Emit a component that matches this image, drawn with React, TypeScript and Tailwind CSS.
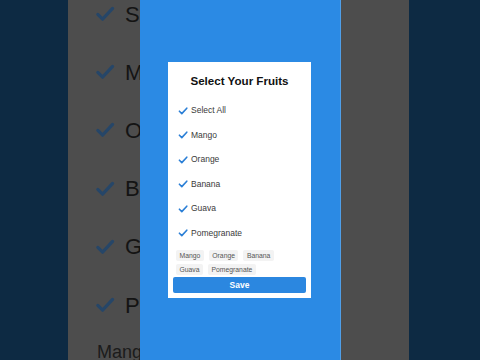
import React from 'react';

const fruits = ['Mango', 'Orange', 'Banana', 'Guava', 'Pomegranate'];

const Tick: React.FC<{ className?: string }> = ({ className }) => (
  <svg viewBox="0 0 24 20" className={className} fill="none">
    <path d="M3 10.5l6 6L21.5 3" stroke="currentColor" strokeWidth="4" strokeLinecap="round" strokeLinejoin="round" />
  </svg>
);

const BackdropStrip: React.FC = () => (
  <div className="w-[72px] h-full bg-[#4d4d4d] overflow-hidden">
    <div className="-mt-[15px] w-[300px]">
      {['Select All', ...fruits].map((f) => (
        <div key={f} className="h-[58.2px] flex items-center pl-[27px] gap-[10px]">
          <Tick className="w-[20px] h-[16px] text-[#264668]" />
          <span className="text-[22px] text-[#141414]">{f}</span>
        </div>
      ))}
      <div className="pl-[29px] text-[18px] text-[#1b1b1b] leading-none mt-[9px]">Mango</div>
    </div>
  </div>
);

export default function App() {
  return (
    <div
      className="w-[480px] h-[360px] flex overflow-hidden bg-[#0d2a43]"
      style={{ fontFamily: '"Liberation Sans", Arial, sans-serif' }}
    >
      <div className="w-[68px] h-full bg-[#0d2a43]" />
      <BackdropStrip />

      <div className="w-[201px] h-full bg-[#2b8ae4] border-r border-[#4f9fe9] pt-[62px] pl-[28px]">
        <div className="w-[143px] h-[236px] bg-white flex flex-col px-[5px] pb-[5px]">
          <h1 className="pt-[11px] h-[26px] leading-[16px] text-center text-[11.6px] font-bold text-[#111]">
            Select Your Fruits
          </h1>
          <div className="mt-[10.5px] pl-[5px]">
            {['Select All', ...fruits].map((f) => (
              <div key={f} className="h-[24.5px] flex items-center gap-[3px]">
                <Tick className="w-[10px] h-[8px] text-[#2b7fd6]" />
                <span className="text-[8.5px] text-[#3a3a3a]">{f}</span>
              </div>
            ))}
          </div>
          <div className="mt-[4px] px-[3px] flex flex-wrap gap-x-[5px] gap-y-[3px]">
            {fruits.map((f) => (
              <span key={f} className="h-[11px] leading-[11px] px-[3.5px] rounded-[2px] bg-[#f3f3f3] text-[6.8px] text-[#555]">
                {f}
              </span>
            ))}
          </div>
          <button className="mt-auto h-[16px] w-full rounded-[2px] bg-[#2b87e0] text-white text-[8.5px] font-bold leading-none">
            Save
          </button>
        </div>
      </div>

      <div className="w-[68px] h-full bg-[#4d4d4d]" />
      <div className="flex-1 h-full bg-[#0d2a43]" />
    </div>
  );
}
